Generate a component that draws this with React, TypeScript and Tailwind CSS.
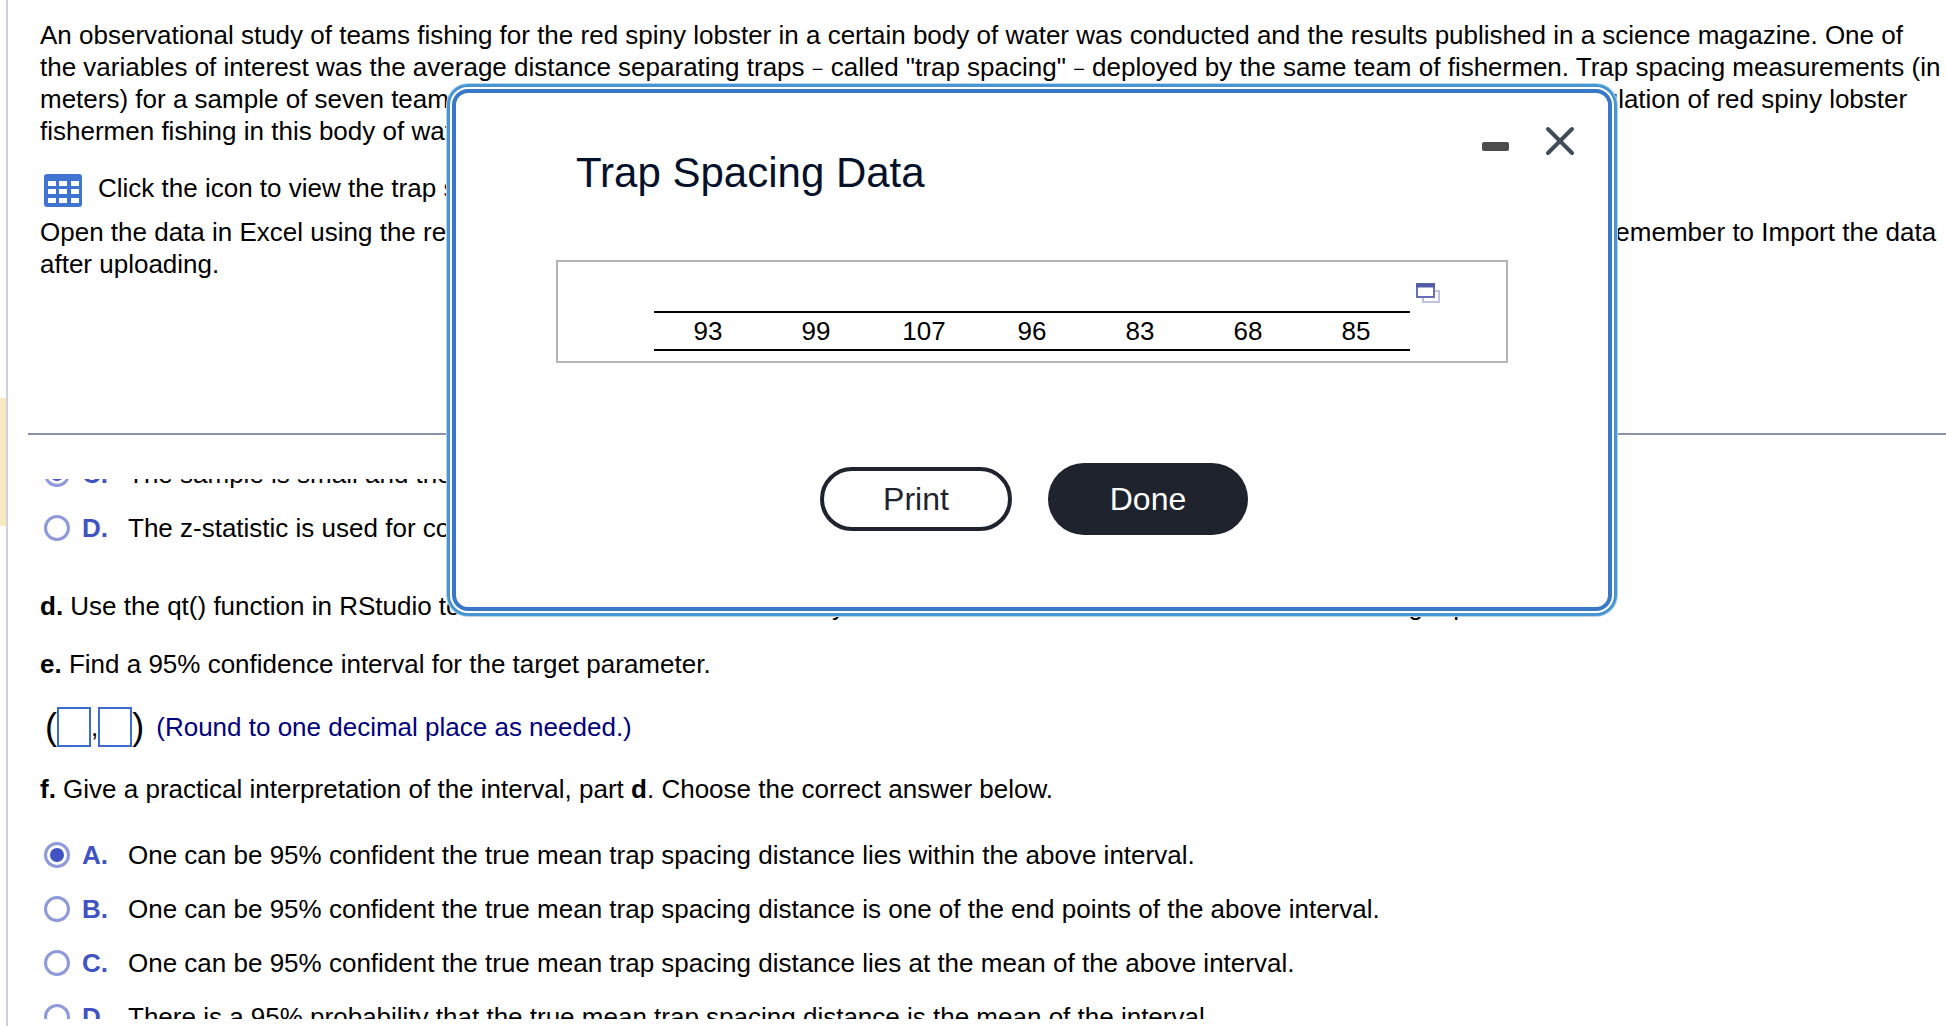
import { useState } from "react";

type OptionProps = {
  name: string;
  letter: string;
  text: string;
  checked: boolean;
  onSelect: () => void;
};

const trapSpacing = [93, 99, 107, 96, 83, 68, 85];

const statisticOptions = [
  { letter: "C", text: "The sample is small and the population standard deviation is unknown." },
  { letter: "D", text: "The z-statistic is used for comparing two population means." },
];

const intervalOptions = [
  { letter: "A", text: "One can be 95% confident the true mean trap spacing distance lies within the above interval." },
  { letter: "B", text: "One can be 95% confident the true mean trap spacing distance is one of the end points of the above interval." },
  { letter: "C", text: "One can be 95% confident the true mean trap spacing distance lies at the mean of the above interval." },
  { letter: "D", text: "There is a 95% probability that the true mean trap spacing distance is the mean of the interval." },
];

const Option = ({ name, letter, text, checked, onSelect }: OptionProps) => (
  <label className="flex h-[54px] items-center whitespace-nowrap">
    <input
      type="radio"
      name={name}
      checked={checked}
      onChange={onSelect}
      className="ml-1 grid size-[26px] shrink-0 appearance-none place-content-center rounded-full border-[3px] border-[#8e99dd] bg-white before:size-3.5 before:rounded-full checked:before:bg-[#3f53c2]"
    />
    <span className="ml-3 w-[46px] shrink-0 font-bold text-[#3f53c2]">{letter}.</span>
    <span>{text}</span>
  </label>
);

const Dash = () => <span className="text-[20px] leading-none">−</span>;

const TableIcon = () => (
  <svg width="38" height="33" viewBox="0 0 38 33" aria-hidden="true">
    <rect width="38" height="33" rx="3" fill="#3f74d1" />
    {[7, 15, 24].map((y) =>
      [4, 15, 27].map((x) => <rect key={`${x}-${y}`} x={x} y={y} width="8" height="5" fill="#fff" />),
    )}
  </svg>
);

const PopOutIcon = () => (
  <svg width="25" height="21" viewBox="0 0 25 21" fill="none" aria-hidden="true">
    <path d="M7 15v4h16V8h-4" stroke="#bcc2e0" strokeWidth="2" />
    <rect x="1" y="1" width="17" height="13" fill="#fff" stroke="#6670b4" strokeWidth="2" />
    <path d="M0 2.5h19" stroke="#525ca6" strokeWidth="4" />
  </svg>
);

const DataDialog = ({ onClose }: { onClose: () => void }) => (
  <div
    role="dialog"
    aria-labelledby="dialog-title"
    className="absolute top-[89px] left-[452px] w-[1160px] rounded-[16px] border-4 border-[#3878c7] bg-white px-[100px] pb-[72px] shadow-[0_0_0_2px_#fff,0_0_0_5px_#4796d1,0_0_0_6px_#b5d5ed]"
  >
    <div className="flex justify-between pt-[33px]">
      <h1 id="dialog-title" className="mt-[23px] ml-5 text-[42px] leading-12 text-[#05112a]">
        Trap Spacing Data
      </h1>
      <div className="-mr-[67px] flex h-9 gap-9">
        <button type="button" aria-label="Minimize" onClick={onClose} className="flex items-center pt-1">
          <span className="h-[9px] w-[27px] rounded-[2px] bg-[#4d4d4d]" />
        </button>
        <button type="button" aria-label="Close" onClick={onClose} className="flex">
          <svg width="30" height="30" viewBox="0 0 30 30" stroke="#424b58" strokeWidth="4" strokeLinecap="round">
            <path d="M3 3l24 24M27 3L3 27" />
          </svg>
        </button>
      </div>
    </div>

    <div className="mt-[63px] flex items-start border-2 border-[#b5b5b5] pt-5 pb-2.5 pl-24">
      <table className="mt-[29px] w-[756px] table-fixed border-y-2 border-black text-center">
        <tbody>
          <tr>
            {trapSpacing.map((distance) => (
              <td key={distance} className="h-[38px] p-0">
                {distance}
              </td>
            ))}
          </tr>
        </tbody>
      </table>
      <button type="button" aria-label="Open data" className="mt-px ml-1.5">
        <PopOutIcon />
      </button>
    </div>

    <div className="mt-[100px] ml-1 flex items-center justify-center gap-9 text-[32px]">
      <button type="button" className="h-16 w-48 rounded-full border-4 border-[#1f232d] text-[#1f232d]">
        Print
      </button>
      <button type="button" onClick={onClose} className="h-[72px] w-[200px] rounded-full bg-[#1f232d] text-white">
        Done
      </button>
    </div>
  </div>
);

const App = () => {
  const [open, setOpen] = useState(true);
  const [statistic, setStatistic] = useState("C");
  const [interpretation, setInterpretation] = useState("A");

  return (
    <div className="relative flex h-screen overflow-hidden bg-white font-['Liberation_Sans',Arial,sans-serif] text-[26px] leading-8 text-black">
      <div className="w-1.5 shrink-0 pt-[398px]">
        <div className="h-32 bg-[#f7eac3]" />
      </div>

      <main className="flex min-w-0 flex-1 flex-col border-l-2 border-[#cdd1e0] pl-5">
        <section className="h-[435px] shrink-0 border-b-2 border-[#8a93a8] pt-[19px] pl-3 whitespace-nowrap">
          <p>
            An observational study of teams fishing for the red spiny lobster in a certain body of water was conducted
            and the results published in a science magazine. One of
            <br />
            the variables of interest was the average distance separating traps <Dash /> called "trap spacing" <Dash />{" "}
            deployed by the same team of fishermen. Trap spacing measurements (in
            <br />
            meters) for a sample of seven teams of red spiny lobster fishermen are listed in the table. Of interest is
            the mean trap spacing in the population of red spiny lobster
            <br />
            fishermen fishing in this body of water.
          </p>
          <div className="mt-[26px] flex items-start">
            <button type="button" aria-label="View the trap spacing data" onClick={() => setOpen(true)} className="mt-px ml-1">
              <TableIcon />
            </button>
            <p className="ml-4 -mt-px">Click the icon to view the trap spacing data.</p>
          </div>
          <p className="mt-[9px]">
            Open the data in Excel using the resource link below the table, then upload the file to the statistics
            computing software. When doing this remember to Import the data
            <br />
            after uploading.
          </p>
        </section>

        <section className="mt-11 mb-[7px] min-h-0 flex-1 overflow-hidden pl-3 whitespace-nowrap">
          <div className="-mt-8">
            {statisticOptions.map((option) => (
              <Option
                key={option.letter}
                {...option}
                name="statistic"
                checked={statistic === option.letter}
                onSelect={() => setStatistic(option.letter)}
              />
            ))}
          </div>
          <p className="mt-[35px]">
            <b>d.</b> Use the qt() function in RStudio to find the critical t-value necessary for a 95% confidence
            interval for the means using repeated
          </p>
          <p className="mt-[26px]">
            <b>e.</b> Find a 95% confidence interval for the target parameter.
          </p>
          <div className="mt-[27px] flex h-10 items-center">
            <span className="ml-[5px] text-[36px]">(</span>
            <input aria-label="Lower limit" className="h-10 w-[34px] border-2 border-[#3d6bcc] text-center" />
            <span>,</span>
            <input aria-label="Upper limit" className="h-10 w-[34px] border-2 border-[#3d6bcc] text-center" />
            <span className="text-[36px]">)</span>
            <span className="ml-3 text-[#00007f]">(Round to one decimal place as needed.)</span>
          </div>
          <p className="mt-[26px]">
            <b>f.</b> Give a practical interpretation of the interval, part <b>d</b>. Choose the correct answer below.
          </p>
          <div className="mt-[23px]">
            {intervalOptions.map((option) => (
              <Option
                key={option.letter}
                {...option}
                name="interpretation"
                checked={interpretation === option.letter}
                onSelect={() => setInterpretation(option.letter)}
              />
            ))}
          </div>
        </section>
      </main>

      {open && <DataDialog onClose={() => setOpen(false)} />}
    </div>
  );
};

export default App;
